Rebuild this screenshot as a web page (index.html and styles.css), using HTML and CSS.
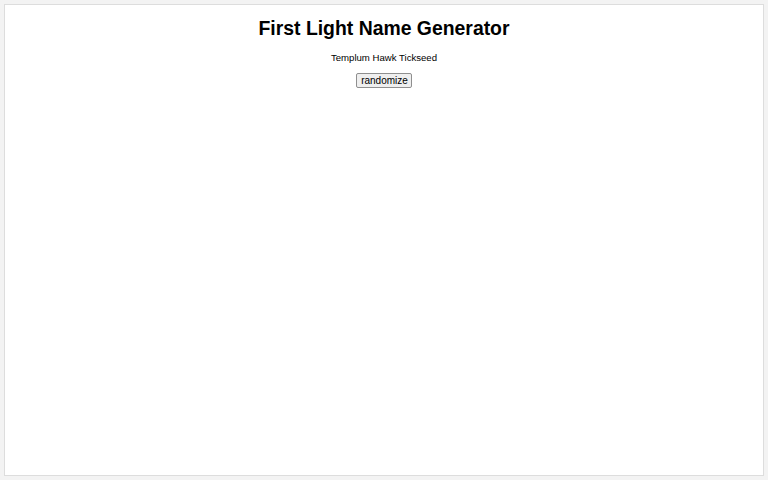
FILE: index.html
```html
<!DOCTYPE html>
<html lang="en">
<head>
    <meta charset="UTF-8">
    <meta name="viewport" content="width=device-width, initial-scale=1.0">
    <title>First Light Name Generator</title>
    <link rel="stylesheet" href="styles.css">
</head>
<body>
    <div class="page">
        <h1>First Light Name Generator</h1>
        <p class="name">Templum Hawk Tickseed</p>
        <button class="randomize">randomize</button>
    </div>
</body>
</html>
```

FILE: styles.css
```css
body {
    font-family: 'Liberation Sans', Arial, sans-serif;
    margin: 0;
    padding: 4px;
    background-color: #f3f3f3;
    height: 100vh;
    box-sizing: border-box;
}

.page {
    background: white;
    border: 1px solid #dddddd;
    height: 100%;
    box-sizing: border-box;
    text-align: center;
    padding-top: 12px;
}

.page h1 {
    margin: 0;
    font-size: 19.4px;
    font-weight: bold;
    color: #000;
}

.name {
    margin: 12px 0 7px;
    font-size: 9.6px;
    color: #000;
}

.randomize {
    font-family: 'Liberation Sans', Arial, sans-serif;
    font-size: 10px;
    padding: 1px 3px 1px 4px;
    background-color: #efefef;
    border: 1px solid #8f8f8f;
    border-radius: 2px;
    color: #000;
}
```
